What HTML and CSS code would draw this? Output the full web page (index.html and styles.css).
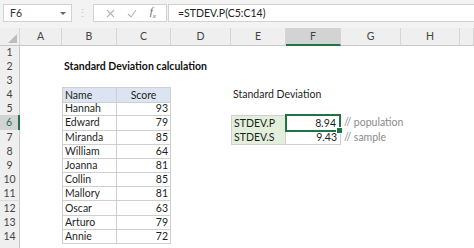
FILE: index.html
```html
<!DOCTYPE html>
<html lang="en">
<head>
    <meta charset="UTF-8">
    <title>Standard Deviation calculation</title>
    <link rel="stylesheet" href="styles.css">
</head>
<body>
    <div class="formula-bar">
        <div class="name-box">
            <span>F6</span>
            <span class="caret"></span>
        </div>
        <div class="grip">&#8942;</div>
        <div class="fx-buttons">
            <svg width="9" height="9" viewBox="0 0 9 9"><path d="M1 1L8 8M8 1L1 8" stroke="#b5b5b5" stroke-width="1.1"/></svg>
            <svg width="10" height="9" viewBox="0 0 10 9"><path d="M1 5L4 8L9 1" stroke="#b5b5b5" stroke-width="1.1" fill="none"/></svg>
            <span class="fx">f<sub>x</sub></span>
        </div>
        <div class="formula">=STDEV.P(C5:C14)</div>
    </div>

    <div class="sheet">
        <div class="row head">
            <div class="corner"></div>
            <div class="ch">A</div>
            <div class="ch">B</div>
            <div class="ch">C</div>
            <div class="ch">D</div>
            <div class="ch">E</div>
            <div class="ch selected">F</div>
            <div class="ch">G</div>
            <div class="ch">H</div>
            <div class="ch"></div>
        </div>
        <div class="row"><div class="rh">1</div></div>
        <div class="row"><div class="rh">2</div><div></div><div class="title">Standard Deviation calculation</div></div>
        <div class="row"><div class="rh">3</div></div>
        <div class="row">
            <div class="rh">4</div><div></div>
            <div class="cell th first">Name</div><div class="cell th center">Score</div>
            <div></div><div class="label">Standard Deviation</div>
        </div>
        <div class="row"><div class="rh">5</div><div></div><div class="cell first">Hannah</div><div class="cell num">93</div></div>
        <div class="row">
            <div class="rh selected">6</div><div></div>
            <div class="cell first">Edward</div><div class="cell num">79</div>
            <div></div><div class="fn top">STDEV.P</div><div class="val active">8.94</div><div class="note">// population</div>
        </div>
        <div class="row">
            <div class="rh">7</div><div></div>
            <div class="cell first">Miranda</div><div class="cell num">85</div>
            <div></div><div class="fn">STDEV.S</div><div class="val">9.43</div><div class="note">// sample</div>
        </div>
        <div class="row"><div class="rh">8</div><div></div><div class="cell first">William</div><div class="cell num">64</div></div>
        <div class="row"><div class="rh">9</div><div></div><div class="cell first">Joanna</div><div class="cell num">81</div></div>
        <div class="row"><div class="rh">10</div><div></div><div class="cell first">Collin</div><div class="cell num">85</div></div>
        <div class="row"><div class="rh">11</div><div></div><div class="cell first">Mallory</div><div class="cell num">81</div></div>
        <div class="row"><div class="rh">12</div><div></div><div class="cell first">Oscar</div><div class="cell num">63</div></div>
        <div class="row"><div class="rh">13</div><div></div><div class="cell first">Arturo</div><div class="cell num">79</div></div>
        <div class="row"><div class="rh">14</div><div></div><div class="cell first">Annie</div><div class="cell num">72</div></div>
        <div class="row"><div class="rh"></div></div>
    </div>
</body>
</html>
```

FILE: styles.css
```css
body {
    margin: 0;
    width: 474px;
    height: 248px;
    overflow: hidden;
    background: #fff;
    font-family: Lato, "Open Sans", sans-serif;
    font-size: 10.5px;
    color: #1e1e1e;
}

/* formula bar */
.formula-bar {
    display: flex;
    align-items: center;
    height: 28px;
    padding: 0 0 2px 3px;
    box-sizing: border-box;
    background: #f3f3f3;
}

.name-box {
    width: 69px;
    height: 18px;
    box-sizing: border-box;
    display: flex;
    align-items: center;
    justify-content: space-between;
    padding: 0 5px 0 6px;
    background: #fff;
    border: 1px solid #d2d2d2;
    color: #333;
}

.caret {
    width: 0;
    height: 0;
    border-left: 3px solid transparent;
    border-right: 3px solid transparent;
    border-top: 3px solid #666;
}

.grip {
    width: 21px;
    text-align: center;
    color: #c4c4c4;
    font-size: 11px;
}

.fx-buttons {
    width: 74px;
    height: 18px;
    box-sizing: border-box;
    display: flex;
    align-items: center;
    justify-content: space-around;
    padding: 0 4px 0 6px;
    background: #fff;
    border: 1px solid #d2d2d2;
}

.fx {
    font-family: "Liberation Serif", serif;
    font-style: italic;
    font-size: 11px;
    color: #666;
}

.fx sub {
    font-size: 7px;
}

.formula {
    flex: 1;
    height: 18px;
    box-sizing: border-box;
    margin-left: 1px;
    padding-left: 9px;
    line-height: 16px;
    background: #fff;
    border: 1px solid #d2d2d2;
    border-right: 0;
    color: #222;
}

/* sheet grid */
.row {
    display: grid;
    grid-template-columns: 20px 42px 55px 54px 60px 55px 55px 60px 59px 14px;
    height: 14.2px;
    line-height: 14px;
    white-space: nowrap;
}

.row > div {
    box-sizing: border-box;
}

.row.head {
    height: 16.5px;
    line-height: 16px;
}

.corner,
.ch {
    position: relative;
    background: #efefef;
    border-right: 1px solid #d6d6d6;
    border-bottom: 1px solid #c8c8c8;
    text-align: center;
    color: #444;
}

.corner::after {
    content: "";
    position: absolute;
    right: 2px;
    bottom: 2px;
    border-left: 9px solid transparent;
    border-bottom: 9px solid #bdbdbd;
}

.ch.selected {
    background: #d3d3d3;
    border-bottom: 2px solid #217346;
    color: #444;
}

.rh {
    background: #efefef;
    border-right: 1px solid #c8c8c8;
    border-bottom: 1px solid #dcdcdc;
    text-align: center;
    color: #444;
}

.rh.selected {
    background: #d3d3d3;
    border-right: 2px solid #217346;
    color: #217346;
}

.title {
    padding-left: 2px;
    font-weight: bold;
    color: #111;
}

.label {
    padding-left: 2px;
}

/* data table */
.cell {
    padding: 0 2px;
    border-right: 1px solid #cfcfcf;
    border-bottom: 1px solid #cfcfcf;
}

.cell.first {
    border-left: 1px solid #cfcfcf;
}

.cell.th {
    background: #dde4f1;
    border-top: 1px solid #cfcfcf;
}

.center {
    text-align: center;
}

.num {
    text-align: right;
}

.fn {
    padding-left: 2px;
    background: #e2efda;
    border: 1px solid #cfcfcf;
    border-top: 0;
}

.fn.top {
    border-top: 1px solid #cfcfcf;
}

.val {
    padding-right: 3px;
    text-align: right;
    border-right: 1px solid #cfcfcf;
    border-bottom: 1px solid #cfcfcf;
}

.val.active {
    position: relative;
    border: 2px solid #217346;
    margin: -1px 0 -1px -1px;
}

.val.active::after {
    content: "";
    position: absolute;
    right: -4px;
    bottom: -4px;
    width: 5px;
    height: 5px;
    background: #217346;
    border: 1px solid #fff;
}

.note {
    padding-left: 3px;
    color: #8a8a8a;
}
```
